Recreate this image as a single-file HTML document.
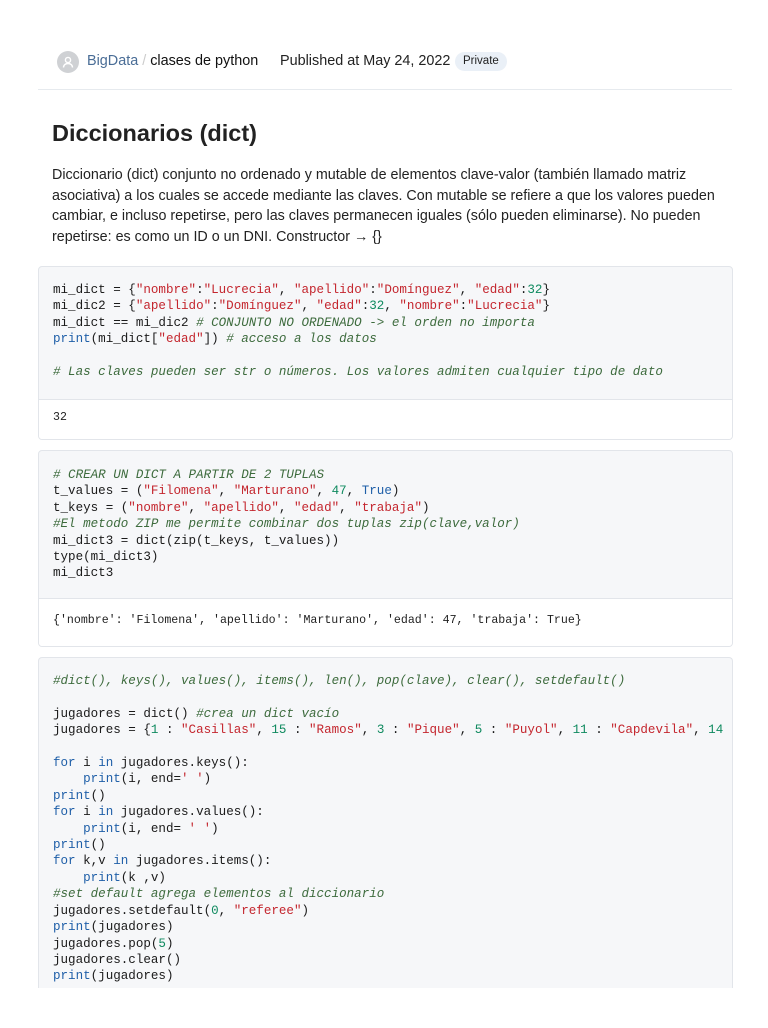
<!DOCTYPE html>
<html><head><meta charset="utf-8"><style>
body{margin:0;background:#fff;width:768px;height:1024px;overflow:hidden;font-family:"Liberation Sans",sans-serif;color:#1f1f1f;position:relative}
.abs{position:absolute;white-space:nowrap}
.box{position:absolute;left:38px;width:693px;border:1px solid #e2e5ea;border-radius:4px;background:#f6f7f9;overflow:hidden}
.code{font-family:"Liberation Mono",monospace;font-size:12.55px;line-height:16.4px;white-space:pre;padding-left:14px;color:#1a1a1a}
.out{background:#fff;border-top:1px solid #e2e5ea;font-family:"Liberation Mono",monospace;font-size:11.6px;white-space:pre;padding-left:14px}
.s{color:#c4262e}.n{color:#0f8a5f}.c{color:#3d6b3d;font-style:italic}.k{color:#1f5fa8}
</style></head><body>
<div class="abs" style="left:57px;top:51px;width:22px;height:22px;border-radius:50%;background:#cfd1d4"></div>
<svg class="abs" style="left:61px;top:55px" width="14" height="14" viewBox="0 0 14 14"><circle cx="7" cy="5" r="2.6" fill="none" stroke="#fff" stroke-width="1.4"/><path d="M2.5 12.5c0-2.5 2-4 4.5-4s4.5 1.5 4.5 4" fill="none" stroke="#fff" stroke-width="1.4"/></svg>
<div class="abs" style="left:87px;top:53px;font-size:14.4px"><span style="color:#4a6d96">BigData</span> <span style="color:#ccc">/</span> <span style="color:#111">clases de python</span></div>
<div class="abs" style="left:280px;top:53px;font-size:14.4px;color:#222">Published at May 24, 2022</div>
<div class="abs" style="left:455px;top:52px;height:19px;padding:0 8px;border-radius:10px;background:#eaf0f7;font-size:11.5px;line-height:18px;color:#222">Private</div>
<div class="abs" style="left:38px;top:89px;width:694px;height:1px;background:#e6eaee"></div>
<div class="abs" style="left:52px;top:120px;font-size:23.5px;font-weight:bold;color:#222">Diccionarios (dict)</div>
<div class="abs" style="left:52px;top:165px;font-size:14.3px;line-height:20.5px;color:#222">Diccionario (dict) conjunto no ordenado y mutable de elementos clave-valor (también llamado matriz<br>asociativa) a los cuales se accede mediante las claves. Con mutable se refiere a que los valores pueden<br>cambiar, e incluso repetirse, pero las claves permanecen iguales (sólo pueden eliminarse). No pueden<br>repetirse: es como un ID o un DNI. Constructor → {}</div>

<div class="box" style="top:266px;height:172px">
<div class="code" style="padding-top:15px;height:117px">mi_dict = {<span class="s">"nombre"</span>:<span class="s">"Lucrecia"</span>, <span class="s">"apellido"</span>:<span class="s">"Domínguez"</span>, <span class="s">"edad"</span>:<span class="n">32</span>}
mi_dic2 = {<span class="s">"apellido"</span>:<span class="s">"Domínguez"</span>, <span class="s">"edad"</span>:<span class="n">32</span>, <span class="s">"nombre"</span>:<span class="s">"Lucrecia"</span>}
mi_dict == mi_dic2 <span class="c"># CONJUNTO NO ORDENADO -> el orden no importa</span>
<span class="k">print</span>(mi_dict[<span class="s">"edad"</span>]) <span class="c"># acceso a los datos</span>

<span class="c"># Las claves pueden ser str o números. Los valores admiten cualquier tipo de dato</span></div>
<div class="out" style="height:40px;line-height:36px">32</div>
</div>

<div class="box" style="top:450px;height:195px">
<div class="code" style="padding-top:16px;height:131px"><span class="c"># CREAR UN DICT A PARTIR DE 2 TUPLAS</span>
t_values = (<span class="s">"Filomena"</span>, <span class="s">"Marturano"</span>, <span class="n">47</span>, <span class="k">True</span>)
t_keys = (<span class="s">"nombre"</span>, <span class="s">"apellido"</span>, <span class="s">"edad"</span>, <span class="s">"trabaja"</span>)
<span class="c">#El metodo ZIP me permite combinar dos tuplas zip(clave,valor)</span>
mi_dict3 = dict(zip(t_keys, t_values))
type(mi_dict3)
mi_dict3</div>
<div class="out" style="height:47px;line-height:44px">{'nombre': 'Filomena', 'apellido': 'Marturano', 'edad': 47, 'trabaja': True}</div>
</div>

<div class="box" style="top:657px;height:340px;border-bottom:none">
<div class="code" style="padding-top:15px"><span class="c">#dict(), keys(), values(), items(), len(), pop(clave), clear(), setdefault()</span>

jugadores = dict() <span class="c">#crea un dict vacío</span>
jugadores = {<span class="n">1</span> : <span class="s">"Casillas"</span>, <span class="n">15</span> : <span class="s">"Ramos"</span>, <span class="n">3</span> : <span class="s">"Pique"</span>, <span class="n">5</span> : <span class="s">"Puyol"</span>, <span class="n">11</span> : <span class="s">"Capdevila"</span>, <span class="n">14</span>

<span class="k">for</span> i <span class="k">in</span> jugadores.keys():
    <span class="k">print</span>(i, end=<span class="s">' '</span>)
<span class="k">print</span>()
<span class="k">for</span> i <span class="k">in</span> jugadores.values():
    <span class="k">print</span>(i, end= <span class="s">' '</span>)
<span class="k">print</span>()
<span class="k">for</span> k,v <span class="k">in</span> jugadores.items():
    <span class="k">print</span>(k ,v)
<span class="c">#set default agrega elementos al diccionario</span>
jugadores.setdefault(<span class="n">0</span>, <span class="s">"referee"</span>)
<span class="k">print</span>(jugadores)
jugadores.pop(<span class="n">5</span>)
jugadores.clear()
<span class="k">print</span>(jugadores)</div>
</div>
<div class="abs" style="left:37px;top:988px;width:700px;height:40px;background:#fff"></div>
</body></html>
